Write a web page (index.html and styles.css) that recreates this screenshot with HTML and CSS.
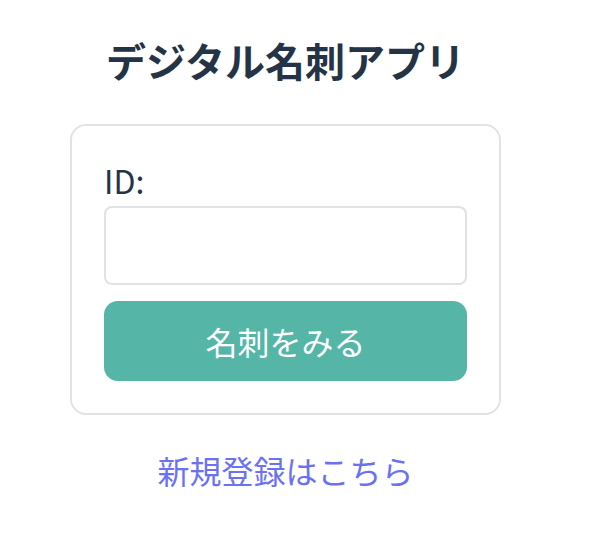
FILE: index.html
```html
<!DOCTYPE html>
<html lang="ja">
<head>
<meta charset="utf-8">
<title>デジタル名刺アプリ</title>
<link rel="stylesheet" href="styles.css">
</head>
<body>
<main class="page">
  <h1 class="title">デジタル名刺アプリ</h1>
  <form class="card">
    <label class="label" for="uid">ID:</label>
    <input class="input" id="uid" type="text">
    <button class="button" type="button">名刺をみる</button>
  </form>
  <a class="link" href="#">新規登録はこちら</a>
</main>
</body>
</html>
```
FILE: styles.css
```css
html, body {
  margin: 0;
  padding: 0;
  background: #ffffff;
}
body {
  font-family: "Noto Sans CJK JP", "Noto Sans", sans-serif;
  color: #243446;
}
.page {
  width: 431px;
  margin-left: 70px;
  padding-top: 36px;
  display: flex;
  flex-direction: column;
  align-items: center;
}
.title {
  margin: 0;
  font-size: 40px;
  line-height: 48px;
  font-weight: 700;
  color: #243446;
  text-align: center;
}
.card {
  box-sizing: border-box;
  width: 431px;
  margin-top: 40px;
  padding: 30px 32px 32px;
  border: 2px solid #e3e3e3;
  border-radius: 16px;
  display: flex;
  flex-direction: column;
}
.label {
  font-size: 32px;
  line-height: 48px;
  color: #243446;
}
.input {
  box-sizing: border-box;
  width: 100%;
  height: 79px;
  margin: 2px 0 0;
  border: 2px solid #e2e2e2;
  border-radius: 8px;
  background: #fff;
  font-size: 32px;
  padding: 0 16px;
  outline: none;
}
.button {
  box-sizing: border-box;
  width: 100%;
  height: 80px;
  margin-top: 16px;
  border: none;
  border-radius: 14px;
  background: #55b5a7;
  color: #ffffff;
  font-family: "Noto Sans CJK JP", "Noto Sans", sans-serif;
  font-size: 32px;
  font-weight: 400;
  letter-spacing: 0;
}
.link {
  margin-top: 31px;
  font-size: 32px;
  line-height: 48px;
  color: #6b72f2;
  text-decoration: none;
}
```
